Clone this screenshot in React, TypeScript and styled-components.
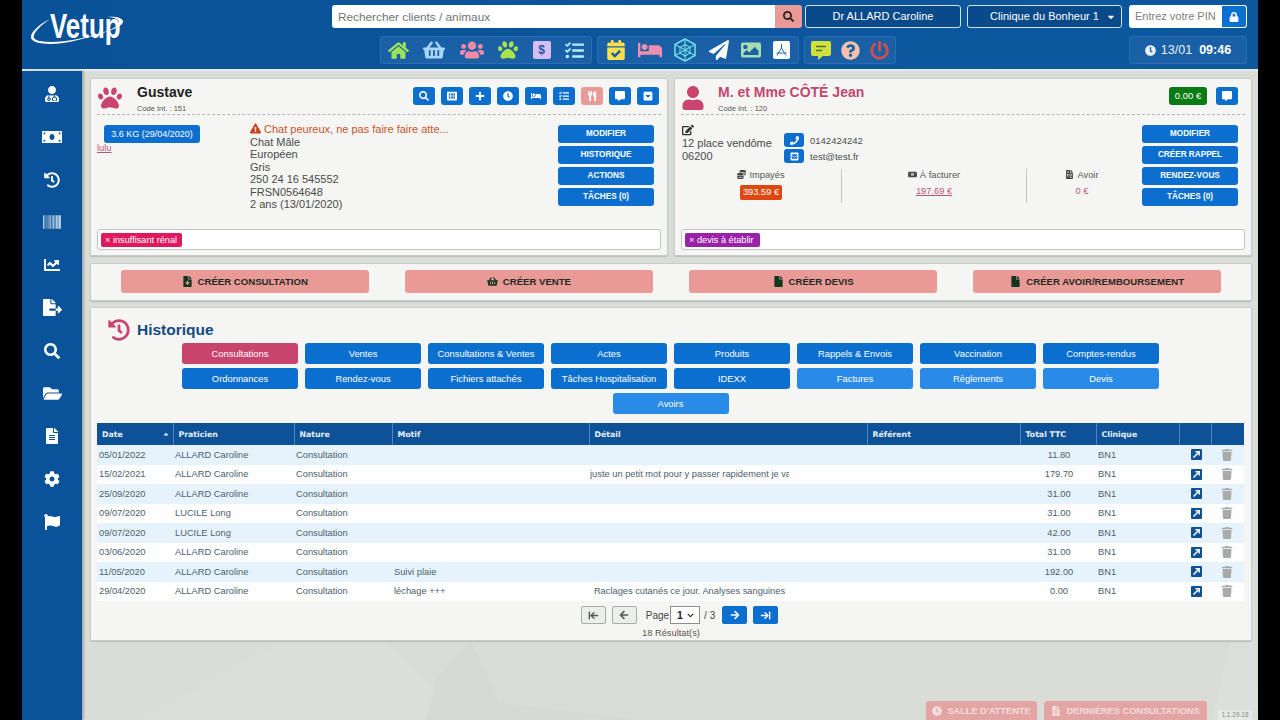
import React from "react";
import styled, { createGlobalStyle } from "styled-components";
import {
  FaHome, FaShoppingBasket, FaUsers, FaPaw, FaTasks, FaCalendarCheck, FaBed, FaPaperPlane, FaImage,
  FaQuestionCircle, FaPowerOff, FaUserMd, FaMoneyBill, FaHistory, FaBarcode, FaChartLine,
  FaFileExport, FaSearch, FaFolderOpen, FaFileAlt, FaCog, FaFlag, FaUser, FaEdit, FaPhone, FaEnvelopeSquare,
  FaFileMedical, FaFile, FaCoins, FaMoneyBillAlt, FaFileInvoice, FaTrash, FaLock, FaClock, FaPlus, FaListAlt,
  FaExclamationTriangle, FaCaretDown, FaCaretUp, FaArrowLeft, FaArrowRight, FaUtensils, FaCommentAlt,
  FaCaretSquareDown, FaChevronDown,
} from "react-icons/fa";
import { ArrowLeftToLine, ArrowRightToLine } from "lucide-react";

const GlobalStyle = createGlobalStyle`
  html, body { margin: 0; padding: 0; height: 720px; overflow: hidden; background: #000; }
  * { box-sizing: border-box; }
  body { font-family: "Liberation Sans", Arial, sans-serif; }
`;

const Frame = styled.div`
  width: 1280px;
  height: 720px;
  padding: 0 22px;
  background: #000;
`;

const Screen = styled.div`
  position: relative;
  width: 1236px;
  height: 720px;
  display: flex;
  flex-direction: column;
  overflow: hidden;
  background: #d9dcd7;
`;

const Header = styled.header`
  flex: none;
  height: 71px;
  display: flex;
  background: linear-gradient(90deg, #0a5298, #0c589f);
  border-bottom: 2px solid #e4ebef;
`;

const Logo = styled.div`
  position: relative;
  flex: none;
  width: 310px;
  padding: 5px 0 0 28px;
  color: #fff;
  font-size: 35px;
  font-weight: 700;
  line-height: 42px;
  span { display: inline-block; transform: scaleX(0.74); transform-origin: left; }
  svg { position: absolute; left: 8px; top: 14px; }
`;

const HeaderMain = styled.div`
  flex: 1;
  display: flex;
  flex-direction: column;
  padding-top: 5px;
  gap: 8px;
`;

const HeaderRow = styled.div`
  display: flex;
  height: 23px;
`;

const SearchInput = styled.div`
  width: 443px;
  background: #fff;
  border-radius: 3px 0 0 3px;
  color: #6f7478;
  font-size: 11.8px;
  line-height: 24px;
  padding-left: 6px;
`;

const SearchButton = styled.div`
  width: 27px;
  margin-right: 3px;
  background: #e99a97;
  border-radius: 0 3px 3px 0;
  display: flex;
  align-items: center;
  justify-content: center;
  font-size: 11px;
  color: #222;
`;

const HeaderSelect = styled.div<{ $w: number; $mr: number }>`
  position: relative;
  width: ${(p) => p.$w}px;
  margin-right: ${(p) => p.$mr}px;
  border: 1px solid #cfe0ee;
  border-radius: 3px;
  background: #0a4a8b;
  color: #fff;
  font-size: 11px;
  line-height: 21px;
  text-align: center;
  svg { position: absolute; right: 5px; top: 6px; font-size: 10px; }
`;

const PinInput = styled.div`
  width: 93px;
  background: #fff;
  border-radius: 3px 0 0 3px;
  color: #7b8084;
  font-size: 11px;
  line-height: 23px;
  padding-left: 6px;
`;

const PinButton = styled.div`
  width: 25px;
  background: #0c6fd2;
  border: 1px solid #fff;
  border-left: 0;
  border-radius: 0 3px 3px 0;
  color: #fff;
  font-size: 10px;
  display: flex;
  align-items: center;
  justify-content: center;
`;

const ToolRow = styled.div`
  display: flex;
  padding-left: 48px;
  height: 28px;
  gap: 5px;
`;

const ToolGroup = styled.div<{ $w: number; $pad: number }>`
  width: ${(p) => p.$w}px;
  display: flex;
  align-items: center;
  justify-content: space-between;
  padding: 0 ${(p) => p.$pad}px;
  background: #1a60a6;
  border: 1px solid #2a6eb0;
  border-radius: 3px;
`;

const ToolIcon = styled.span<{ $c: string; $s?: number }>`
  display: flex;
  color: ${(p) => p.$c};
  font-size: ${(p) => p.$s || 20}px;
`;

const DollarBox = styled.span`
  width: 18px;
  height: 18px;
  background: #d6bdf3;
  border-radius: 2px;
  color: #1d5a9c;
  font-size: 12px;
  font-weight: 700;
  line-height: 18px;
  text-align: center;
`;

const AppBox = styled.span`
  width: 17px;
  height: 18px;
  background: #fff;
  border-radius: 2px;
  display: flex;
  align-items: center;
  justify-content: center;
`;

const ClockBox = styled.div`
  margin-left: auto;
  margin-right: 11px;
  width: 118px;
  background: #1a60a6;
  border: 1px solid #2a6eb0;
  border-radius: 3px;
  color: #e8f0f6;
  font-size: 12.5px;
  display: flex;
  align-items: center;
  justify-content: center;
  gap: 5px;
  b { color: #fff; margin-left: 2px; }
  svg { font-size: 11px; }
`;

const Body = styled.div`
  flex: 1;
  display: flex;
  min-height: 0;
`;

const Sidebar = styled.nav`
  flex: none;
  width: 60px;
  background: #0a5299;
  box-shadow: 2px 0 2px #a9aca6;
  display: flex;
  flex-direction: column;
  align-items: center;
  padding-top: 14px;
  gap: 24.8px;
  color: #fff;
`;

const SideItem = styled.span<{ $s: number }>`
  height: 18px;
  display: flex;
  align-items: center;
  font-size: ${(p) => p.$s}px;
`;

const Main = styled.main`
  position: relative;
  flex: 1;
  padding: 7px 6px 0 8px;
  display: flex;
  flex-direction: column;
  gap: 6.5px;
`;

const Watermark = styled.svg`
  position: absolute;
  inset: 0;
`;

const Panel = styled.section`
  position: relative;
  background: #f5f6f3;
  border: 1px solid #c9ccc8;
  border-radius: 2px;
  box-shadow: 0 1px 1px #b9bcb6;
`;

const TopRow = styled.div`
  display: flex;
  gap: 6px;
`;

const CardPanel = styled(Panel)`
  flex: 1;
  height: 178px;
  padding: 0 6px;
  display: flex;
  flex-direction: column;
`;

const CardHead = styled.div`
  height: 36px;
  display: flex;
  border-bottom: 1px dashed #b4b6b3;
`;

const HeadIcon = styled.div<{ $w: number; $pl: number }>`
  width: ${(p) => p.$w}px;
  padding: 7px 0 0 ${(p) => p.$pl}px;
  color: #c9446f;
  font-size: 24px;
  svg { display: block; }
`;

const HeadTitle = styled.div<{ $pink?: boolean }>`
  flex: 1;
  padding-top: 5px;
  color: ${(p) => (p.$pink ? "#c2476f" : "#222")};
  font-size: 14px;
  font-weight: 700;
  line-height: 16px;
  small {
    display: block;
    margin-top: 4px;
    color: #555;
    font-size: 7.5px;
    font-weight: 400;
    line-height: 10px;
  }
`;

const HeadTools = styled.div<{ $r: number }>`
  display: flex;
  gap: 6px;
  padding: 8px ${(p) => p.$r}px 0 0;
`;

const IconBtn = styled.div<{ $bg?: string }>`
  width: 22px;
  height: 18px;
  background: ${(p) => p.$bg || "#0c6fd0"};
  border-radius: 3px;
  color: #fff;
  font-size: 10px;
  display: flex;
  align-items: center;
  justify-content: center;
`;

const BalanceBadge = styled.div`
  width: 38px;
  height: 18px;
  margin-right: 3px;
  background: #0a7a12;
  border-radius: 3px;
  color: #fff;
  font-size: 9.5px;
  line-height: 18px;
  text-align: center;
`;

const CardBody = styled.div`
  flex: 1;
  display: flex;
  padding-top: 10px;
`;

const WeightCol = styled.div`
  width: 153px;
  flex: none;
`;

const WeightBadge = styled.div`
  width: 96px;
  height: 18px;
  margin-left: 7px;
  background: #0c6fd0;
  border-radius: 3px;
  color: #fff;
  font-size: 9px;
  line-height: 18px;
  text-align: center;
`;

const PinkLink = styled.a`
  color: #b9557c;
  font-size: 9.3px;
  text-decoration: underline;
`;

const LuluLink = styled(PinkLink)`
  display: block;
  line-height: 11px;
`;

const Infos = styled.div`
  flex: 1;
  margin-top: -2px;
  color: #4a4a4a;
  font-size: 11px;
  line-height: 12.5px;
`;

const Warning = styled.div`
  color: #c8542c;
  svg { color: #c8421c; font-size: 11px; vertical-align: -1px; margin-right: 3px; }
`;

const ActionCol = styled.div`
  flex: none;
  width: 96px;
  margin-right: 7px;
  display: flex;
  flex-direction: column;
  gap: 3px;
`;

const ActionBtn = styled.div`
  height: 18px;
  background: #0c6fd0;
  border-radius: 3px;
  color: #fff;
  font-size: 8.2px;
  font-weight: 700;
  line-height: 18px;
  text-align: center;
`;

const TagBox = styled.div`
  height: 21px;
  margin-bottom: 5px;
  padding: 3px;
  background: #fff;
  border: 1px solid #c2c4c1;
  border-radius: 3px;
`;

const Tag = styled.span<{ $bg: string; $w: number }>`
  display: block;
  width: ${(p) => p.$w}px;
  height: 14px;
  background: ${(p) => p.$bg};
  border-radius: 2px;
  color: #fff;
  font-size: 9.2px;
  line-height: 14px;
  padding-left: 4px;
  white-space: nowrap;
`;

const ClientLeft = styled.div`
  flex: 1;
`;

const ContactRow = styled.div`
  display: flex;
  height: 47px;
  margin-top: -1px;
`;

const Address = styled.div`
  width: 103px;
  padding-left: 1px;
  color: #4a4a4a;
  font-size: 11px;
  line-height: 13px;
  svg { display: block; color: #333; font-size: 12px; margin-bottom: 1px; }
`;

const Contacts = styled.div`
  padding-top: 9px;
  display: flex;
  flex-direction: column;
  gap: 2px;
`;

const ContactLine = styled.div`
  display: flex;
  align-items: center;
  gap: 6px;
  color: #4d4d4d;
  font-size: 9.5px;
`;

const ContactIcon = styled.span`
  width: 20px;
  height: 14px;
  background: #0c6fd0;
  border-radius: 3px;
  color: #fff;
  font-size: 9px;
  display: flex;
  align-items: center;
  justify-content: center;
`;

const Stats = styled.div`
  display: grid;
  grid-template-columns: 161px 185px 110px;
  margin-top: -2px;
`;

const Stat = styled.div<{ $border?: boolean }>`
  height: 34px;
  text-align: center;
  color: #555;
  font-size: 9.3px;
  line-height: 12px;
  border-right: ${(p) => (p.$border ? "1px solid #c3c5c2" : "0")};
  svg { font-size: 9px; vertical-align: -1px; margin-right: 3px; color: #444; }
`;

const StatValue = styled.div`
  margin-top: 4px;
  line-height: 13px;
  color: #b9557c;
  font-size: 9.3px;
`;

const OverdueBadge = styled.span`
  display: inline-block;
  width: 42px;
  height: 15px;
  background: #e0470f;
  border-radius: 2px;
  color: #fff;
  line-height: 15px;
`;

const CreatePanel = styled(Panel)`
  height: 38px;
  display: grid;
  grid-template-columns: repeat(4, 247.5px);
  justify-content: space-between;
  align-items: center;
  padding: 0 30px;
`;

const CreateBtn = styled.div`
  height: 23px;
  background: #e99a97;
  border-radius: 3px;
  color: #1d2b22;
  font-size: 9.6px;
  font-weight: 700;
  display: flex;
  align-items: center;
  justify-content: center;
  gap: 5px;
  svg { font-size: 11px; color: #12371e; }
`;

const HistoryPanel = styled(Panel)`
  height: 334px;
  padding: 0 6px;
`;

const HistoryTitle = styled.h2`
  margin: 0;
  height: 35px;
  padding: 9px 0 0 11px;
  display: flex;
  align-items: center;
  gap: 7px;
  color: #15497e;
  font-size: 15.5px;
  font-weight: 700;
  svg { color: #c9446f; font-size: 22px; }
`;

const Tabs = styled.div`
  display: flex;
  flex-wrap: wrap;
  justify-content: center;
  gap: 4px 7px;
  width: 977px;
  margin-left: 85px;
`;

const Tab = styled.div<{ $v?: "pink" | "light" }>`
  width: 116px;
  height: 21px;
  background: ${(p) => (p.$v === "pink" ? "#c8446f" : p.$v === "light" ? "#2a8ae8" : "#0b6fd0")};
  border-radius: 3px;
  color: #fff;
  font-size: 9.4px;
  line-height: 21px;
  text-align: center;
  white-space: nowrap;
`;

const Table = styled.table`
  width: 1147px;
  margin-top: 9px;
  border-collapse: collapse;
  table-layout: fixed;
  color: #4d5f6e;
  font-size: 9.3px;
`;

const Th = styled.th`
  position: relative;
  height: 22px;
  padding: 0 0 0 5px;
  background: #0d5299;
  border-right: 1px solid #4f86bb;
  color: #e8f0f7;
  font-family: "DejaVu Sans", sans-serif;
  font-size: 7.8px;
  font-weight: 700;
  text-align: left;
  svg { position: absolute; right: 3px; top: 7px; font-size: 8px; }
  &:last-child { border-right: 0; }
`;

const Row = styled.tr<{ $odd: boolean }>`
  height: 19.5px;
  background: ${(p) => (p.$odd ? "#e6f3fc" : "#fdfefd")};
`;

const Td = styled.td<{ $center?: boolean }>`
  padding: 0 0 0 2px;
  text-align: ${(p) => (p.$center ? "center" : "left")};
  overflow: hidden;
  white-space: nowrap;
`;

const DetailClip = styled.div`
  width: 199px;
  overflow: hidden;
  text-align: center;
  white-space: nowrap;
  margin-left: -1px;
`;

const LeftClip = styled(DetailClip)`
  text-align: left;
`;

const OpenBtn = styled.span`
  display: inline-block;
  vertical-align: middle;
  width: 11px;
  height: 11px;
  background: #0d5299;
  border-radius: 1px;
  svg { display: block; }
`;

const TrashIcon = styled(FaTrash)`
  margin-right: 3px;
  color: #a9abab;
  font-size: 12px;
  vertical-align: middle;
`;

const Pager = styled.div`
  display: flex;
  justify-content: center;
  align-items: center;
  height: 18px;
  margin-top: 5px;
  margin-left: 23px;
  color: #444;
  font-size: 10px;
`;

const PageBtn = styled.div<{ $on?: boolean }>`
  width: 25px;
  height: 18px;
  margin-right: 6px;
  background: ${(p) => (p.$on ? "#0c6fd0" : "#eceeeb")};
  border: 1px solid ${(p) => (p.$on ? "#0c6fd0" : "#a9aba8")};
  border-radius: 2px;
  color: ${(p) => (p.$on ? "#fff" : "#555")};
  font-size: 10px;
  display: flex;
  align-items: center;
  justify-content: center;
`;

const PageSelect = styled.div`
  position: relative;
  width: 30px;
  height: 18px;
  margin: 0 4px 0 1px;
  border: 1px solid #8d8f8d;
  background: #fff;
  color: #222;
  font-size: 10.5px;
  font-weight: 700;
  line-height: 16px;
  padding-left: 6px;
  svg { position: absolute; right: 5px; top: 5px; font-size: 7px; }
`;

const PageLabel = styled.span`
  margin-left: 3px;
`;

const PageTotal = styled.span`
  margin-right: 7px;
`;

const ResultCount = styled.div`
  margin-top: 4px;
  color: #555;
  font-size: 9.3px;
  text-align: center;
`;

const DockRow = styled.div`
  position: absolute;
  right: 6px;
  bottom: 0;
  display: flex;
  align-items: flex-end;
  gap: 7px;
`;

const DockBtn = styled.div<{ $w: number }>`
  width: ${(p) => p.$w}px;
  height: 19px;
  background: #e3a5a3;
  border-radius: 3px 3px 0 0;
  color: #f4dcda;
  font-size: 9.2px;
  font-weight: 700;
  display: flex;
  align-items: center;
  justify-content: center;
  gap: 5px;
  svg { font-size: 10px; }
`;

const Version = styled.div`
  width: 34px;
  height: 10px;
  margin-left: 4px;
  background: #e6e8e5;
  color: #8a8c8a;
  font-size: 6.5px;
  line-height: 10px;
  text-align: center;
`;

const WebIcon = () => (
  <svg width="22" height="24" viewBox="0 0 22 24" fill="none" stroke="#6fdde2" strokeWidth="1.6">
    <path d="M11 1 21 6.5v11L11 23 1 17.5v-11z" />
    <path d="M11 1v22M1 6.5l20 11M21 6.5l-20 11" strokeWidth="1.1" />
    <path d="M11 6.5l5 3v5.5l-5 3-5-3V9.5z" strokeWidth="1.1" />
  </svg>
);

const NoteBubble = () => (
  <svg width="20" height="19" viewBox="0 0 20 19">
    <path d="M2 0h16a2 2 0 0 1 2 2v11a2 2 0 0 1-2 2h-6l-5 4v-4H2a2 2 0 0 1-2-2V2a2 2 0 0 1 2-2z" fill="#cfe03a" />
    <path d="M5 5.500h10M5 9.500h6" stroke="#4c6f3a" strokeWidth="1.300" />
  </svg>
);

const AppGlyph = () => (
  <svg width="13" height="14" viewBox="0 0 13 14" fill="none" stroke="#2a6aa8" strokeWidth="1">
    <path d="M6.500 1v4M6.500 5 2 12.500M6.500 5 11 12.500M1.500 10h10" />
  </svg>
);

const OpenIcon = () => (
  <OpenBtn>
    <svg width="11" height="11" viewBox="0 0 11 11">
      <path d="M2.500 8.500 7 4M4.500 2.800h3.700v3.700" fill="none" stroke="#fff" strokeWidth="1.500" />
    </svg>
  </OpenBtn>
);

const sideIcons = [
  { Icon: FaUserMd, s: 16 },
  { Icon: FaMoneyBill, s: 20 },
  { Icon: FaHistory, s: 16 },
  { Icon: FaBarcode, s: 18 },
  { Icon: FaChartLine, s: 16 },
  { Icon: FaFileExport, s: 19 },
  { Icon: FaSearch, s: 16 },
  { Icon: FaFolderOpen, s: 19 },
  { Icon: FaFileAlt, s: 16 },
  { Icon: FaCog, s: 16 },
  { Icon: FaFlag, s: 16 },
];

const petTools = [
  { icon: <FaSearch /> },
  { icon: <FaListAlt /> },
  { icon: <FaPlus /> },
  { icon: <FaClock /> },
  { icon: <FaBed /> },
  { icon: <FaTasks /> },
  { icon: <FaUtensils />, bg: "#e99a97" },
  { icon: <FaCommentAlt /> },
  { icon: <FaCaretSquareDown /> },
];

const tabs: { label: string; v?: "pink" | "light" }[] = [
  { label: "Consultations", v: "pink" },
  { label: "Ventes" },
  { label: "Consultations & Ventes" },
  { label: "Actes" },
  { label: "Produits" },
  { label: "Rappels & Envois" },
  { label: "Vaccination" },
  { label: "Comptes-rendus" },
  { label: "Ordonnances" },
  { label: "Rendez-vous" },
  { label: "Fichiers attachés" },
  { label: "Tâches Hospitalisation" },
  { label: "IDEXX" },
  { label: "Factures", v: "light" },
  { label: "Règlements", v: "light" },
  { label: "Devis", v: "light" },
  { label: "Avoirs", v: "light" },
];

const colWidths = [76, 121, 98, 197, 278, 153, 76, 83, 32, 33];
const headers = ["Date", "Praticien", "Nature", "Motif", "Détail", "Référent", "Total TTC", "Clinique", "", ""];

const rows = [
  { date: "05/01/2022", who: "ALLARD Caroline", motif: "", detail: "", total: "11.80" },
  { date: "15/02/2021", who: "ALLARD Caroline", motif: "", detail: "juste un petit mot pour y passer rapidement je vais", total: "179.70", clip: true },
  { date: "25/09/2020", who: "ALLARD Caroline", motif: "", detail: "", total: "31.00" },
  { date: "09/07/2020", who: "LUCILE Long", motif: "", detail: "", total: "31.00" },
  { date: "09/07/2020", who: "LUCILE Long", motif: "", detail: "", total: "42.00" },
  { date: "03/06/2020", who: "ALLARD Caroline", motif: "", detail: "", total: "31.00" },
  { date: "11/05/2020", who: "ALLARD Caroline", motif: "Suivi plaie", detail: "", total: "192.00" },
  { date: "29/04/2020", who: "ALLARD Caroline", motif: "léchage +++", detail: "Raclages cutanés ce jour. Analyses sanguines", total: "0.00" },
];

export default function App() {
  return (
    <Frame>
      <GlobalStyle />
      <Screen>
        <Header>
          <Logo>
            <svg width="96" height="34" viewBox="30 14 96 34">
              <path d="M50 19C38 25 30 33 31 38c2 7 24 8 47 2 27-7 46-13 45-19-1-4-10-5-16-4 6 0 13 2 12 6-2 6-19 11-41 16-20 4-41 4-44-1-2-4 7-13 16-19z" fill="#fff" />
            </svg>
            <span>Vetup</span>
          </Logo>
          <HeaderMain>
            <HeaderRow>
              <SearchInput>Rechercher clients / animaux</SearchInput>
              <SearchButton><FaSearch /></SearchButton>
              <HeaderSelect $w={156} $mr={6}>Dr ALLARD Caroline</HeaderSelect>
              <HeaderSelect $w={155} $mr={7}>Clinique du Bonheur 1<FaCaretDown /></HeaderSelect>
              <PinInput>Entrez votre PIN</PinInput>
              <PinButton><FaLock /></PinButton>
            </HeaderRow>
            <ToolRow>
              <ToolGroup $w={212} $pad={7}>
                <ToolIcon $c="#9be35a" $s={21}><FaHome /></ToolIcon>
                <ToolIcon $c="#a8d6f7" $s={22}><FaShoppingBasket /></ToolIcon>
                <ToolIcon $c="#f08aa5" $s={24}><FaUsers /></ToolIcon>
                <ToolIcon $c="#a9e34b"><FaPaw /></ToolIcon>
                <DollarBox>$</DollarBox>
                <ToolIcon $c="#b8ebf2" $s={19}><FaTasks /></ToolIcon>
              </ToolGroup>
              <ToolGroup $w={202} $pad={8}>
                <ToolIcon $c="#f8e04c"><FaCalendarCheck /></ToolIcon>
                <ToolIcon $c="#ee8fb0" $s={24}><FaBed /></ToolIcon>
                <ToolIcon $c="#6fdde2"><WebIcon /></ToolIcon>
                <ToolIcon $c="#fff"><FaPaperPlane /></ToolIcon>
                <ToolIcon $c="#a5dcb0"><FaImage /></ToolIcon>
                <AppBox><AppGlyph /></AppBox>
              </ToolGroup>
              <ToolGroup $w={92} $pad={6}>
                <ToolIcon $c="#cfe03a"><NoteBubble /></ToolIcon>
                <ToolIcon $c="#f5c0ac" $s={19}><FaQuestionCircle /></ToolIcon>
                <ToolIcon $c="#c9504f" $s={19}><FaPowerOff /></ToolIcon>
              </ToolGroup>
              <ClockBox><FaClock /> 13/01 <b>09:46</b></ClockBox>
            </ToolRow>
          </HeaderMain>
        </Header>
        <Body>
          <Sidebar>
            {sideIcons.map(({ Icon, s }, i) => <SideItem key={i} $s={s}><Icon /></SideItem>)}
          </Sidebar>
          <Main>
            <Watermark width="1176" height="649" viewBox="0 0 1176 649">
              <path d="M200 570 300 570 390 649H60z" fill="#dbdeD9" />
              <path d="M355 606 389 570 418 632 558 649H344z" fill="#d6d9d4" />
              <path d="M1170 480 1130 649h46z" fill="#dcdfda" />
            </Watermark>
            <TopRow>
              <CardPanel>
                <CardHead>
                  <HeadIcon $w={40} $pl={1}><FaPaw /></HeadIcon>
                  <HeadTitle>Gustave<small>Code Int. : 151</small></HeadTitle>
                  <HeadTools $r={2}>
                    {petTools.map((t, i) => <IconBtn key={i} $bg={t.bg}>{t.icon}</IconBtn>)}
                  </HeadTools>
                </CardHead>
                <CardBody>
                  <WeightCol>
                    <WeightBadge>3.6 KG (29/04/2020)</WeightBadge>
                    <LuluLink>lulu</LuluLink>
                  </WeightCol>
                  <Infos>
                    <Warning><FaExclamationTriangle />Chat peureux, ne pas faire faire atte...</Warning>
                    Chat Mâle<br />
                    Européen<br />
                    Gris<br />
                    250 24 16 545552<br />
                    FRSN0564648<br />
                    2 ans (13/01/2020)
                  </Infos>
                  <ActionCol>
                    <ActionBtn>MODIFIER</ActionBtn>
                    <ActionBtn>HISTORIQUE</ActionBtn>
                    <ActionBtn>ACTIONS</ActionBtn>
                    <ActionBtn>TÂCHES (0)</ActionBtn>
                  </ActionCol>
                </CardBody>
                <TagBox><Tag $bg="#e0195f" $w={81}>× insuffisant rénal</Tag></TagBox>
              </CardPanel>
              <CardPanel>
                <CardHead>
                  <HeadIcon $w={37} $pl={0}><FaUser /></HeadIcon>
                  <HeadTitle $pink>M. et Mme CÔTÉ Jean<small>Code Int. : 120</small></HeadTitle>
                  <HeadTools $r={7}>
                    <BalanceBadge>0.00 €</BalanceBadge>
                    <IconBtn><FaCommentAlt /></IconBtn>
                  </HeadTools>
                </CardHead>
                <CardBody>
                  <ClientLeft>
                    <ContactRow>
                      <Address>
                        <FaEdit />
                        12 place vendôme<br />06200
                      </Address>
                      <Contacts>
                        <ContactLine><ContactIcon><FaPhone /></ContactIcon>0142424242</ContactLine>
                        <ContactLine><ContactIcon><FaEnvelopeSquare /></ContactIcon>test@test.fr</ContactLine>
                      </Contacts>
                    </ContactRow>
                    <Stats>
                      <Stat $border>
                        <FaCoins />Impayés
                        <StatValue><OverdueBadge>393.59 €</OverdueBadge></StatValue>
                      </Stat>
                      <Stat $border>
                        <FaMoneyBillAlt />À facturer
                        <StatValue><PinkLink>197.69 €</PinkLink></StatValue>
                      </Stat>
                      <Stat>
                        <FaFileInvoice />Avoir
                        <StatValue>0 €</StatValue>
                      </Stat>
                    </Stats>
                  </ClientLeft>
                  <ActionCol>
                    <ActionBtn>MODIFIER</ActionBtn>
                    <ActionBtn>CRÉER RAPPEL</ActionBtn>
                    <ActionBtn>RENDEZ-VOUS</ActionBtn>
                    <ActionBtn>TÂCHES (0)</ActionBtn>
                  </ActionCol>
                </CardBody>
                <TagBox><Tag $bg="#9a22a8" $w={75}>× devis à établir</Tag></TagBox>
              </CardPanel>
            </TopRow>
            <CreatePanel>
              <CreateBtn><FaFileMedical /> CRÉER CONSULTATION</CreateBtn>
              <CreateBtn><FaShoppingBasket /> CRÉER VENTE</CreateBtn>
              <CreateBtn><FaFile /> CRÉER DEVIS</CreateBtn>
              <CreateBtn><FaFile /> CRÉER AVOIR/REMBOURSEMENT</CreateBtn>
            </CreatePanel>
            <HistoryPanel>
              <HistoryTitle><FaHistory />Historique</HistoryTitle>
              <Tabs>
                {tabs.map((t) => <Tab key={t.label} $v={t.v}>{t.label}</Tab>)}
              </Tabs>
              <Table>
                <colgroup>
                  {colWidths.map((w, i) => <col key={i} width={w} />)}
                </colgroup>
                <thead>
                  <tr>
                    {headers.map((h, i) => (
                      <Th key={i}>{h}{i === 0 && <FaCaretUp />}</Th>
                    ))}
                  </tr>
                </thead>
                <tbody>
                  {rows.map((r, i) => (
                    <Row key={i} $odd={i % 2 === 0}>
                      <Td>{r.date}</Td>
                      <Td>{r.who}</Td>
                      <Td>Consultation</Td>
                      <Td>{r.motif}</Td>
                      <Td>{r.clip ? <LeftClip>{r.detail}</LeftClip> : <DetailClip>{r.detail}</DetailClip>}</Td>
                      <Td />
                      <Td $center>{r.total}</Td>
                      <Td>BN1</Td>
                      <Td $center><OpenIcon /></Td>
                      <Td $center><TrashIcon /></Td>
                    </Row>
                  ))}
                </tbody>
              </Table>
              <Pager>
                <PageBtn><ArrowLeftToLine size={11} strokeWidth={3} /></PageBtn>
                <PageBtn><FaArrowLeft /></PageBtn>
                <PageLabel>Page</PageLabel>
                <PageSelect>1<FaChevronDown /></PageSelect>
                <PageTotal>/ 3</PageTotal>
                <PageBtn $on><FaArrowRight /></PageBtn>
                <PageBtn $on><ArrowRightToLine size={11} strokeWidth={3} /></PageBtn>
              </Pager>
              <ResultCount>18 Résultat(s)</ResultCount>
            </HistoryPanel>
            <DockRow>
              <DockBtn $w={111}><FaClock /> SALLE D'ATTENTE</DockBtn>
              <DockBtn $w={163}><FaFileAlt /> DERNIÈRES CONSULTATIONS</DockBtn>
              <Version>1.1.29.18</Version>
            </DockRow>
          </Main>
        </Body>
      </Screen>
    </Frame>
  );
}
